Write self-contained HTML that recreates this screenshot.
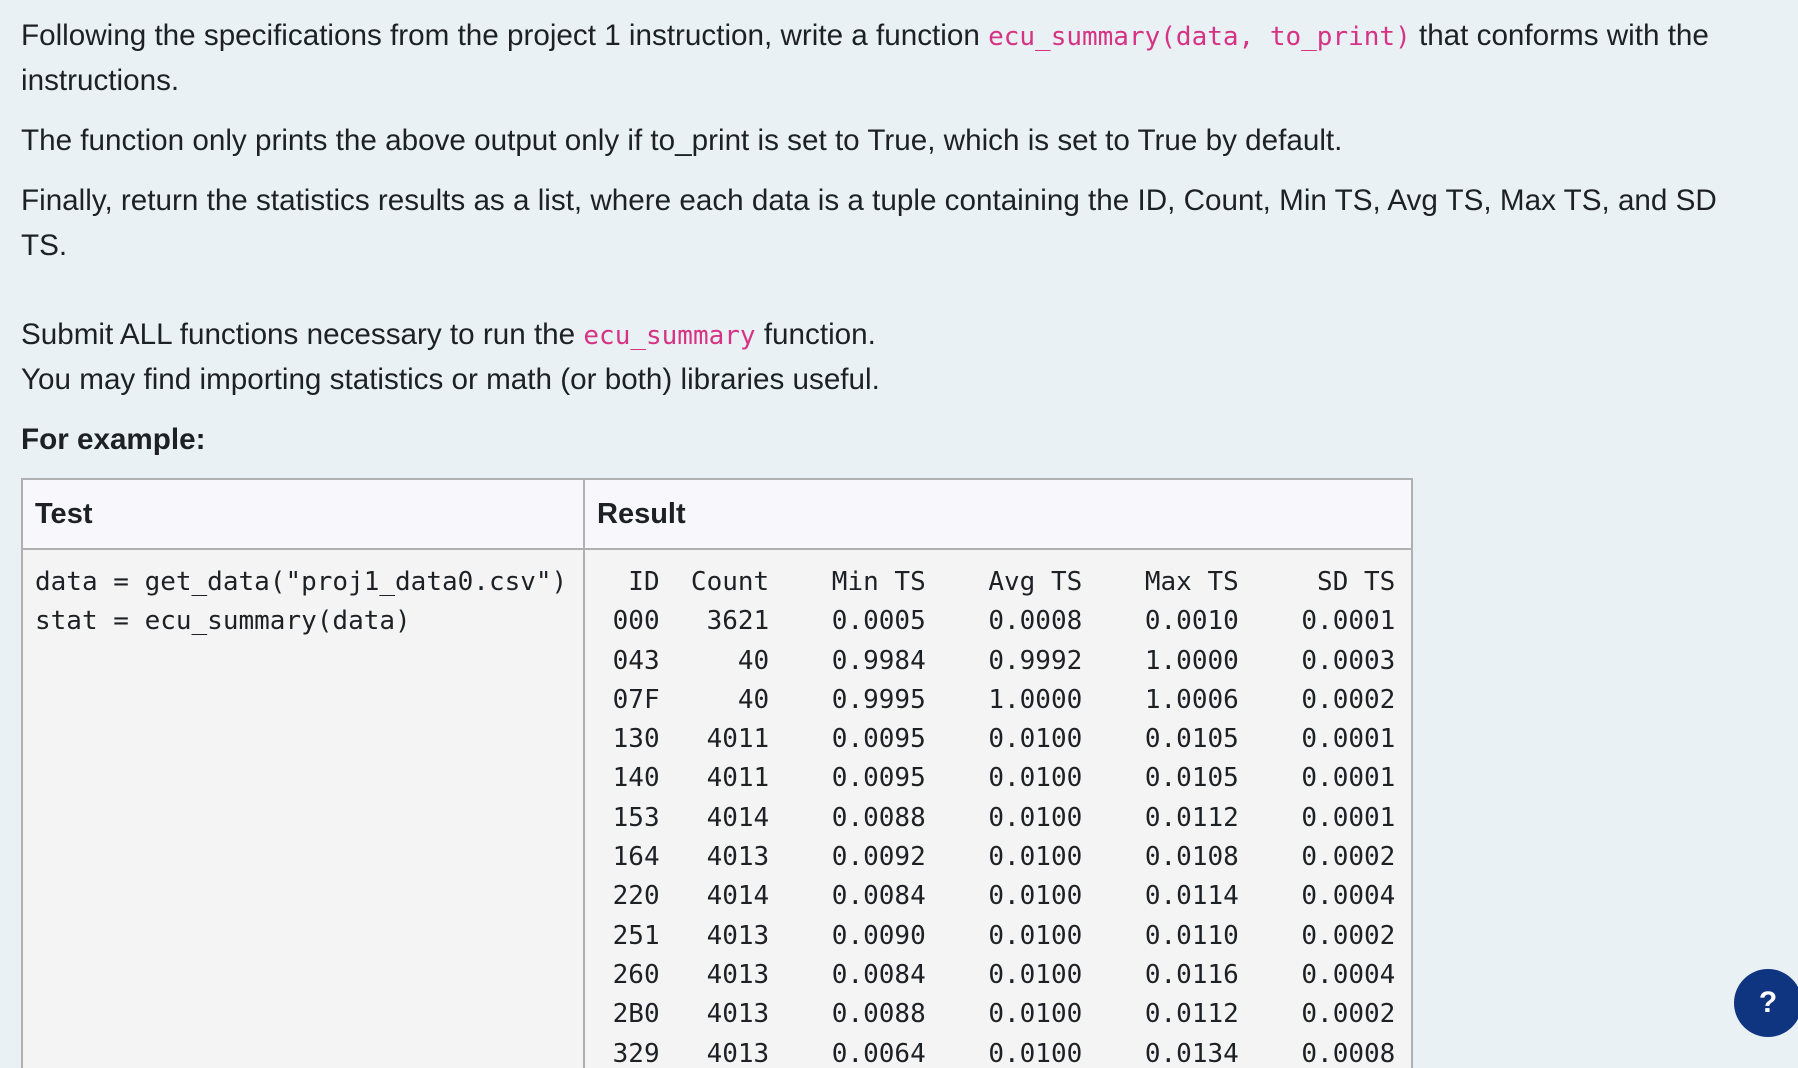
<!DOCTYPE html>
<html><head><meta charset="utf-8"><style>
html,body{margin:0;padding:0;}
html{width:1798px;height:1068px;overflow:hidden;}
body{width:1798px;height:1068px;overflow:hidden;background:#e9f1f4;font-family:"Liberation Sans",sans-serif;color:#1d2125;font-size:29.65px;position:relative;}
.l{position:absolute;left:21px;line-height:45px;white-space:nowrap;}
code{font-family:"DejaVu Sans Mono",monospace;font-size:26px;color:#d63384;}
table{position:absolute;left:21px;top:478px;border-collapse:collapse;width:1392px;}
th,td{border:2px solid #b0b0b0;text-align:left;padding:0 12px;}
th{background:#f8f8fc;height:68px;font-weight:bold;font-size:29px;vertical-align:middle;}
td{background:#f4f4f4;vertical-align:top;}
pre{margin:0;padding-top:13px;font-family:"DejaVu Sans Mono",monospace;font-size:26px;line-height:39.3px;color:#1d2125;}
.help{position:absolute;left:1734px;top:969px;width:68px;height:68px;border-radius:50%;background:#0f3580;color:#fff;font-weight:bold;font-size:30px;text-align:center;line-height:68px;}
</style></head><body>
<div class="l" style="top:13px">Following the specifications from the project 1 instruction, write a function <code>ecu_summary(data, to_print)</code> that conforms with the</div>
<div class="l" style="top:58px">instructions.</div>
<div class="l" style="top:118px">The function only prints the above output only if to_print is set to True, which is set to True by default.</div>
<div class="l" style="top:178px">Finally, return the statistics results as a list, where each data is a tuple containing the ID, Count, Min TS, Avg TS, Max TS, and SD</div>
<div class="l" style="top:223px">TS.</div>
<div class="l" style="top:312px">Submit ALL functions necessary to run the <code>ecu_summary</code> function.</div>
<div class="l" style="top:357px">You may find importing statistics or math (or both) libraries useful.</div>
<div class="l" style="top:417px;font-weight:bold">For example:</div>
<table><tr><th style="width:536px">Test</th><th>Result</th></tr>
<tr><td><pre>data = get_data("proj1_data0.csv")
stat = ecu_summary(data)</pre></td><td><pre>  ID  Count    Min TS    Avg TS    Max TS     SD TS
 000   3621    0.0005    0.0008    0.0010    0.0001
 043     40    0.9984    0.9992    1.0000    0.0003
 07F     40    0.9995    1.0000    1.0006    0.0002
 130   4011    0.0095    0.0100    0.0105    0.0001
 140   4011    0.0095    0.0100    0.0105    0.0001
 153   4014    0.0088    0.0100    0.0112    0.0001
 164   4013    0.0092    0.0100    0.0108    0.0002
 220   4014    0.0084    0.0100    0.0114    0.0004
 251   4013    0.0090    0.0100    0.0110    0.0002
 260   4013    0.0084    0.0100    0.0116    0.0004
 2B0   4013    0.0088    0.0100    0.0112    0.0002
 329   4013    0.0064    0.0100    0.0134    0.0008</pre></td></tr></table>
<div class="help">?</div>
</body></html>
